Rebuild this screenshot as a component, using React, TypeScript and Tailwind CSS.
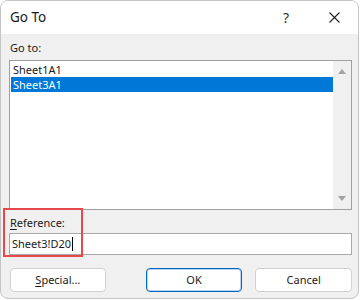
import React from "react";

export default function App() {
  const font = { fontFamily: '"Noto Sans", "Segoe UI", sans-serif' };
  return (
    <div className="w-[361px] h-[300px] bg-white" style={font}>
      <div className="relative w-[359px] h-[299px] rounded-[8px] border border-[#c4c4c4] overflow-hidden bg-[#f0f0f0] flex flex-col">
        {/* Title bar */}
        <div className="h-[33px] bg-white flex items-center shrink-0">
          <div className="pl-[9px] text-[13.5px] text-[#1a1a1a] leading-none flex-1">Go To</div>
          <div className="w-[20px] text-center text-[14px] text-[#333] leading-none mr-[33px]">?</div>
          <svg width="11" height="11" viewBox="0 0 11 11" className="mr-[18px]">
            <path d="M0.5 0.5 L10.5 10.5 M10.5 0.5 L0.5 10.5" stroke="#222" strokeWidth="1.1" />
          </svg>
        </div>
        {/* Body */}
        <div className="flex flex-col pl-[8px] pr-[6px] pt-[6px]">
          <div className="text-[11px] leading-[16px] text-[#1a1a1a] pl-[1px]">Go to:</div>
          <div className="mt-[4px] h-[150px] border border-[#a0a0a0] bg-white flex">
            <div className="flex-1 flex flex-col pt-[1px] pl-[1px]">
              <div className="h-[15px] text-[11px] leading-[15px] text-[#1a1a1a] pl-[2px]">Sheet1A1</div>
              <div className="h-[15px] text-[11px] leading-[15px] text-white bg-[#0078d7] pl-[2px]">Sheet3A1</div>
            </div>
            <div className="w-[18px] bg-[#f0f0f0] flex flex-col items-center justify-between pt-[8px] pb-[8px]">
              <svg width="8" height="5" viewBox="0 0 8 5">
                <path d="M4 0 L8 5 L0 5 Z" fill="#a3a3a3" />
              </svg>
              <svg width="8" height="5" viewBox="0 0 8 5">
                <path d="M0 0 L8 0 L4 5 Z" fill="#a3a3a3" />
              </svg>
            </div>
          </div>
          <div className="mt-[5px] text-[11px] leading-[16px] text-[#1a1a1a] pl-[1px]">
            <span className="underline underline-offset-2">R</span>eference:
          </div>
          <div className="mt-[2px] h-[22px] border border-[#a8a8a8] bg-white flex items-center pl-[2px] text-[11px] text-[#1a1a1a]">
            <span>Sheet3!D20</span>
            <span className="w-px h-[14px] bg-black ml-[1px]"></span>
          </div>
          <div className="mt-[13px] flex">
            <button className="ml-[1px] w-[96px] h-[24px] bg-white border border-[#d0d0d0] rounded-[4px] text-[11px] text-[#1a1a1a]">
              <span className="underline underline-offset-2">S</span>pecial...
            </button>
            <button className="ml-[40px] w-[97px] h-[24px] bg-white border border-[#0067c0] rounded-[4px] text-[11px] text-[#1a1a1a] ring-1 ring-inset ring-[#b8d4ee]">
              OK
            </button>
            <button className="ml-[13px] w-[97px] h-[24px] bg-white border border-[#d0d0d0] rounded-[4px] text-[11px] text-[#1a1a1a]">
              Cancel
            </button>
          </div>
        </div>
        {/* Red annotation box */}
        <div className="absolute left-[2px] top-[207px] w-[80px] h-[49px] border-2 border-[#e8474b]"></div>
      </div>
    </div>
  );
}
